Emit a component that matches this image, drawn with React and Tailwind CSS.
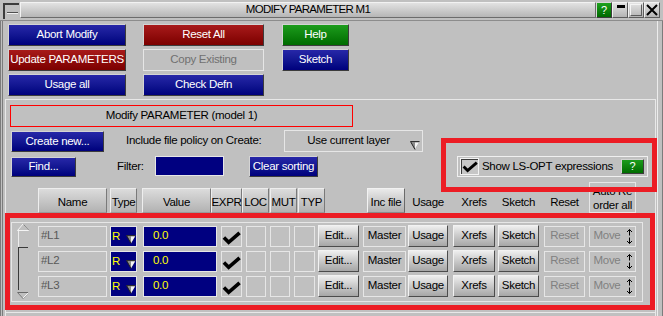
import React from 'react';

const ROWS = ['#L1', '#L2', '#L3'];

function NavyBtn({ children, className = '' }) {
  return (
    <div
      className={`flex items-center justify-center text-white bg-linear-to-b from-[#2727a8] to-[#00007c] border border-t-[#d4d4d4] border-l-[#d4d4d4] border-r-[#3c3c3c] border-b-[#3c3c3c] ${className}`}
    >
      {children}
    </div>
  );
}

function RedBtn({ children, className = '' }) {
  return (
    <div
      className={`flex items-center justify-center text-white bg-linear-to-b from-[#a81a1a] to-[#7c0000] border border-t-[#d4d4d4] border-l-[#d4d4d4] border-r-[#3c3c3c] border-b-[#3c3c3c] ${className}`}
    >
      {children}
    </div>
  );
}

function GreenBtn({ children, className = '' }) {
  return (
    <div
      className={`flex items-center justify-center text-white bg-linear-to-b from-[#1c9c1c] to-[#006c00] border border-t-[#d4d4d4] border-l-[#d4d4d4] border-r-[#3c3c3c] border-b-[#3c3c3c] ${className}`}
    >
      {children}
    </div>
  );
}

function GrayBtn({ children, className = '' }) {
  return (
    <div
      className={`flex items-center justify-center bg-linear-to-b from-[#eeeeee] to-[#a6a6a6] border border-t-[#f2f2f2] border-l-[#f2f2f2] border-r-[#4c4c4c] border-b-[#4c4c4c] ${className}`}
    >
      {children}
    </div>
  );
}

function HeadBtn({ children, className = '' }) {
  return (
    <div
      className={`flex items-center justify-center pt-[5px] bg-linear-to-b from-[#dcdcdc] to-[#b2b2b2] border border-t-[#eeeeee] border-l-[#eeeeee] border-r-[#7a7a7a] border-b-[#9a9a9a] ${className}`}
    >
      {children}
    </div>
  );
}

function FlatBox({ children, className = '' }) {
  return (
    <div className={`flex items-center justify-center border border-[#e6e6e6] ${className}`}>
      {children}
    </div>
  );
}

function DropArrow() {
  return (
    <svg width="10" height="9" viewBox="0 0 10 9">
      <polygon points="0.5,0.5 9.5,0.5 5,8.5" fill="#8c8c8c" />
      <polygon points="5,1.5 9,1.5 5,8" fill="#f4f4f4" />
      <line x1="0.5" y1="0.5" x2="5" y2="8.5" stroke="#202020" strokeWidth="1" />
      <line x1="0.5" y1="0.5" x2="9.5" y2="0.5" stroke="#303030" strokeWidth="1" />
    </svg>
  );
}

function Tick({ w = 20, h = 14, sw = 3.6 }) {
  return (
    <svg width={w} height={h} viewBox="0 0 20 14">
      <polyline
        points="2,6.5 7,11.5 18.5,1.5"
        fill="none"
        stroke="#000"
        strokeWidth={sw}
        strokeLinejoin="miter"
      />
    </svg>
  );
}

function MoveArrows() {
  return (
    <svg width="7" height="17" viewBox="0 0 7 17">
      <path d="M3.5 1.5 V7.5 M1 4 L3.5 1.5 L6 4" fill="none" stroke="#000" strokeWidth="1" />
      <path d="M3.5 9.5 V15.5 M1 13 L3.5 15.5 L6 13" fill="none" stroke="#000" strokeWidth="1" />
    </svg>
  );
}

function ScrollBar() {
  return (
    <svg width="12" height="76" viewBox="0 0 12 76">
      <polyline points="0.5,7.5 6,1 11.5,7.5" fill="none" stroke="#f4f4f4" strokeWidth="1" />
      <line x1="6.5" y1="1.5" x2="11.5" y2="7" stroke="#7a7a7a" strokeWidth="1" />
      <line x1="0.5" y1="7.5" x2="11.5" y2="7.5" stroke="#f4f4f4" strokeWidth="1" />
      <line x1="1.5" y1="8" x2="1.5" y2="24" stroke="#ececec" strokeWidth="1" />
      <line x1="1.5" y1="24" x2="1.5" y2="67" stroke="#3a3a3a" strokeWidth="1" />
      <line x1="1.5" y1="24.5" x2="11" y2="24.5" stroke="#3a3a3a" strokeWidth="1" />
      <line x1="0.5" y1="69.5" x2="11.5" y2="69.5" stroke="#6a6a6a" strokeWidth="1" />
      <polyline points="0.5,69.5 6,75.5 11.5,69.5" fill="none" stroke="#7a7a7a" strokeWidth="1" />
      <line x1="6" y1="75" x2="11.5" y2="69.5" stroke="#f4f4f4" strokeWidth="1" />
    </svg>
  );
}

function TitleBar() {
  return (
    <div className="h-[21px] shrink-0 flex pt-[2px] pb-[2px] border-b border-[#8c8c8c]">
      <div className="w-[20px] pl-[3px] pt-[1px]">
        <div className="w-[16px] h-[16px] border-t-2 border-l-2 border-[#3c3c3c] flex items-center justify-center">
          <div className="w-[11px] h-[1px] bg-[#505050] shadow-[0_1px_0_#f0f0f0]" />
        </div>
      </div>
      <div className="flex-1 flex items-center justify-center bg-linear-to-b from-[#e2e2e2] to-[#b6b6b6] border border-t-[#f2f2f2] border-l-[#f2f2f2] border-r-[#6c6c6c] border-b-[#6c6c6c] text-[11.5px] tracking-[-0.7px]">
        MODIFY PARAMETER M1
      </div>
      <div className="w-[16px] flex items-center justify-center text-white text-[11px] bg-linear-to-b from-[#1ea21e] to-[#006800] border border-t-[#d8d8d8] border-l-[#d8d8d8] border-r-[#3c3c3c] border-b-[#3c3c3c]">
        ?
      </div>
      <div className="w-[16px] pl-[4px] pt-[2px] bg-linear-to-b from-[#e4e4e4] to-[#b4b4b4] border border-t-[#f2f2f2] border-l-[#f2f2f2] border-r-[#5c5c5c] border-b-[#5c5c5c]">
        <div className="w-[8px] h-[3px] bg-black" />
      </div>
      <div className="w-[16px] bg-linear-to-b from-[#e4e4e4] to-[#b4b4b4] border border-t-[#f2f2f2] border-l-[#f2f2f2] border-r-[#5c5c5c] border-b-[#5c5c5c] p-[1px]">
        <div className="w-full h-full border border-t-[#f4f4f4] border-l-[#f4f4f4] border-r-[#5c5c5c] border-b-[#5c5c5c]" />
      </div>
      <div className="w-[16px] flex items-center justify-center bg-linear-to-b from-[#e4e4e4] to-[#b4b4b4] border border-t-[#f2f2f2] border-l-[#f2f2f2] border-r-[#5c5c5c] border-b-[#5c5c5c]">
        <svg width="12" height="12" viewBox="0 0 12 12">
          <path d="M1 1 L11 11 M11 1 L1 11" stroke="#000" strokeWidth="2" />
        </svg>
      </div>
      <div className="w-[3px]" />
    </div>
  );
}

function ParamRow({ name }) {
  return (
    <div className="h-[22px] flex items-center">
      <FlatBox className="w-[69px] h-[21px] justify-start pl-[2px] text-[#585858]">{name}</FlatBox>
      <div className="ml-[3px] w-[27px] h-[21px] bg-[#000080] border border-[#e6e6e6] flex justify-between">
        <span className="pl-[1px] pt-[4px] text-[#ffff00]">R</span>
        <span className="self-end pb-[2px]">
          <DropArrow />
        </span>
      </div>
      <div className="ml-[6px] w-[74px] h-[21px] bg-[#000080] border border-[#e6e6e6] flex items-center pl-[9px] text-[#ffff00]">
        0.0
      </div>
      <FlatBox className="ml-[4px] w-[21px] h-[21px] pt-[3px]">
        <Tick w={19} h={14} sw={3.8} />
      </FlatBox>
      <FlatBox className="ml-[4px] w-[20px] h-[21px]" />
      <FlatBox className="ml-[4px] w-[20px] h-[21px]" />
      <FlatBox className="ml-[4px] w-[21px] h-[21px]" />
      <GrayBtn className="ml-[3px] w-[41px] h-[22px]">Edit...</GrayBtn>
      <FlatBox className="ml-[4px] w-[43px] h-[21px]">Master</FlatBox>
      <GrayBtn className="ml-[2px] w-[40px] h-[22px]">Usage</GrayBtn>
      <GrayBtn className="ml-[5px] w-[42px] h-[22px]">Xrefs</GrayBtn>
      <GrayBtn className="ml-[3px] w-[41px] h-[22px]">Sketch</GrayBtn>
      <FlatBox className="ml-[5px] w-[41px] h-[21px] text-[#808080]">Reset</FlatBox>
      <FlatBox className="ml-[4px] w-[47px] h-[21px] text-[#808080] gap-[6px] pl-[2px]">
        <span>Move</span>
        <MoveArrows />
      </FlatBox>
    </div>
  );
}

export default function App() {
  return (
    <div className="w-[663px] h-[316px] overflow-hidden relative flex flex-col bg-[#c0c0c0] text-black text-[11.5px] tracking-[-0.3px] leading-none font-['Liberation_Sans',Arial,Helvetica,sans-serif]">
      <TitleBar />

      <div className="flex flex-1 min-h-0">
        <div className="w-[3px] border-l border-r border-[#7c7c7c]" />

        <div className="flex-1 flex flex-col min-w-0">
          {/* Action buttons */}
          <div className="pt-[3px] pl-[5px] grid grid-cols-[118px_121px_68px] gap-x-[17px] gap-y-[3px] auto-rows-[22px]">
            <NavyBtn>Abort Modify</NavyBtn>
            <RedBtn>Reset All</RedBtn>
            <GreenBtn className="ml-[1px]">Help</GreenBtn>
            <RedBtn>Update PARAMETERS</RedBtn>
            <FlatBox className="text-[#707070]">Copy Existing</FlatBox>
            <NavyBtn className="ml-[1px]">Sketch</NavyBtn>
            <NavyBtn>Usage all</NavyBtn>
            <NavyBtn>Check Defn</NavyBtn>
          </div>

          {/* Lower panel */}
          <div className="mt-[3px] ml-[2px] mr-[1px] flex-1 flex flex-col border-t border-l border-r border-[#e8e8e8]">
            <div className="mt-[5px] ml-[4px] w-[343px] h-[22px] border border-[#ff0000] flex items-center justify-center">
              Modify PARAMETER (model 1)
            </div>

            <div className="mt-[3px] h-[22px] flex items-end">
              <NavyBtn className="ml-[5px] w-[93px] h-[21px]">Create new...</NavyBtn>
              <div className="ml-[22px] w-[158px] self-center">Include file policy on Create:</div>
              <div className="w-[139px] h-[22px] border border-[#e6e6e6] flex items-center">
                <span className="flex-1 text-center pl-[2px]">Use current layer</span>
                <span className="self-end pb-[1px] pr-[2px]">
                  <DropArrow />
                </span>
              </div>
            </div>

            <div className="mt-[4px] h-[21px] flex items-start">
              <NavyBtn className="ml-[5px] mt-[1px] w-[65px] h-[20px]">Find...</NavyBtn>
              <div className="ml-[41px] w-[38px] self-center">Filter:</div>
              <div className="w-[69px] h-[20px] bg-[#000080] border border-[#e6e6e6]" />
              <NavyBtn className="ml-[25px] w-[69px] h-[21px]">Clear sorting</NavyBtn>
              <div className="ml-[139px] w-[191px] h-[21px] border border-[#f0f0f0] flex items-center">
                <div className="ml-[2px] w-[19px] h-[17px] border border-[#f2f2f2] flex">
                  <div className="flex-1 flex items-center justify-center border-t border-l border-[#3c3c3c] bg-[#c6c6c6]">
                    <Tick w={16} h={12} sw={3.6} />
                  </div>
                </div>
                <span className="ml-[3px] flex-1">Show LS-OPT expressions</span>
                <GreenBtn className="mr-[3px] w-[23px] h-[15px] text-[11px]">?</GreenBtn>
              </div>
            </div>

            {/* Table header */}
            <div className="mt-[5px] h-[31px] flex items-end">
              <HeadBtn className="ml-[32px] w-[69px] h-[25px]">Name</HeadBtn>
              <HeadBtn className="ml-[3px] w-[27px] h-[25px]">Type</HeadBtn>
              <HeadBtn className="ml-[5px] w-[69px] h-[25px]">Value</HeadBtn>
              <HeadBtn className="w-[31px] h-[25px]">EXPR</HeadBtn>
              <HeadBtn className="w-[27px] h-[25px]">LOC</HeadBtn>
              <HeadBtn className="ml-[1px] w-[27px] h-[25px]">MUT</HeadBtn>
              <HeadBtn className="ml-[1px] w-[27px] h-[25px]">TYP</HeadBtn>
              <div className="ml-[42px] w-[38px] h-[25px] flex items-center justify-center pt-[5px] bg-linear-to-b from-[#eaeaea] to-[#b0b0b0] border border-t-[#f2f2f2] border-l-[#f2f2f2] border-r-[#6a6a6a] border-b-[#8a8a8a]">
                Inc file
              </div>
              <div className="ml-[3px] w-[40px] h-[25px] flex items-center justify-center pt-[5px]">Usage</div>
              <div className="ml-[5px] w-[42px] h-[25px] flex items-center justify-center pt-[5px]">Xrefs</div>
              <div className="ml-[3px] w-[41px] h-[25px] flex items-center justify-center pt-[5px]">Sketch</div>
              <div className="ml-[5px] w-[41px] h-[25px] flex items-center justify-center pt-[5px]">Reset</div>
              <div className="ml-[4px] w-[47px] h-[31px] border border-[#e6e6e6] flex flex-col items-center justify-end leading-[14px]">
                <span>Auto Re</span>
                <span>order all</span>
              </div>
            </div>

            {/* Parameter rows */}
            <div className="mt-[9px] ml-[5px] w-[632px] h-[80px] border border-[#e6e6e6] flex">
              <div className="ml-[5px]">
                <ScrollBar />
              </div>
              <div className="ml-[9px] mt-[2px] flex flex-col gap-[3px]">
                {ROWS.map((name) => (
                  <ParamRow key={name} name={name} />
                ))}
              </div>
            </div>

            <div className="mt-[10px] border-t border-[#e8e8e8]" />
          </div>
        </div>

        <div className="w-[6px] border-l border-l-[#ececec] border-r border-r-[#7c7c7c]" />
      </div>

      {/* Highlight annotations */}
      <div className="absolute left-[441px] top-[138px] w-[216px] h-[54px] border-[5px] border-[#ec1c24]" />
      <div className="absolute left-[5px] top-[213px] w-[650px] h-[97px] border-[5px] border-[#ec1c24]" />
    </div>
  );
}
